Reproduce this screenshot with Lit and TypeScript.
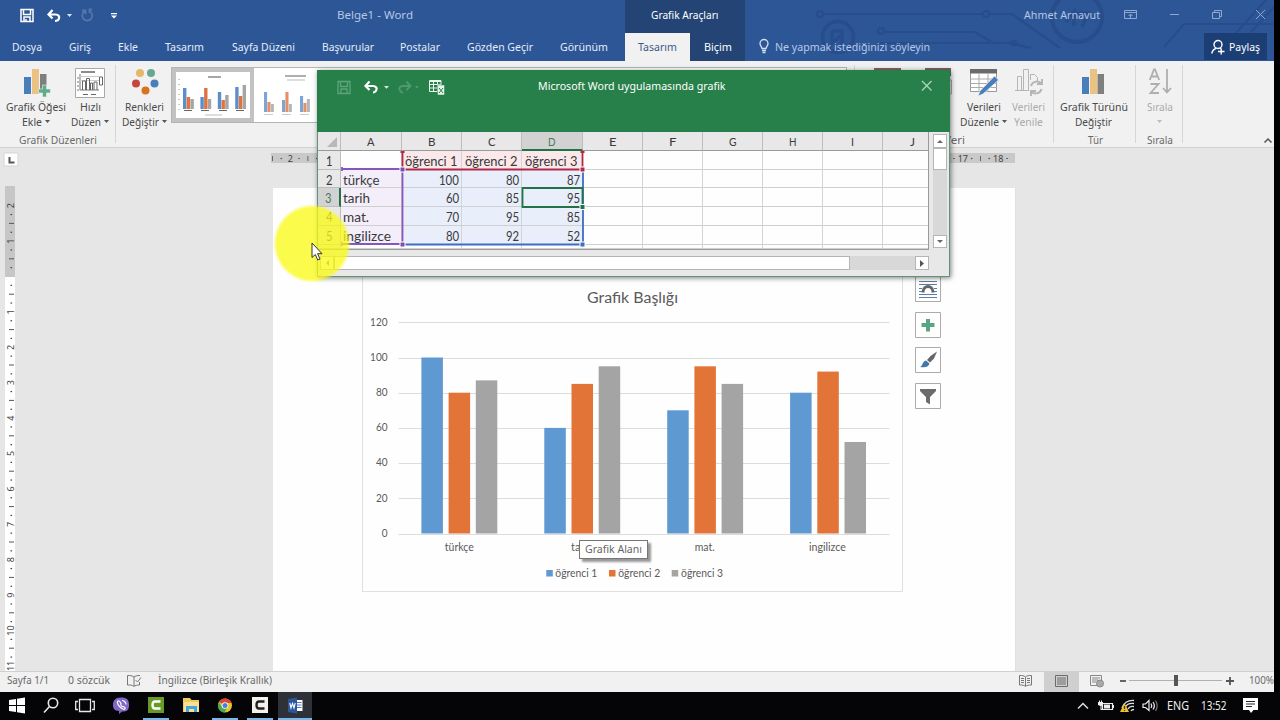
import { LitElement, html, svg, css } from "lit";
import { customElement } from "lit/decorators.js";

// A run of text set to an exact advance width; baseline is 12px below the top.
const t = (s: string, w: number, size = 11.5, cls = "") => html`<svg class="t ${cls}" width=${w} height="15"><text x="0" y="12" font-size=${size} textLength=${w} lengthAdjust="spacingAndGlyphs">${s}</text></svg>`;

const base = css`
  :host { display: block; box-sizing: border-box; font-family: "Noto Sans", "Open Sans", sans-serif; color: #4a4a4a; }
  * { box-sizing: border-box; }
  svg { display: block; overflow: visible; flex: none; }
  .t { fill: currentColor; white-space: pre; }
  .lato { font-family: Lato, sans-serif; }
`;

const caret = (c = "#555") => svg`<svg width="5" height="3"><path d="M0 0h5L2.500 3z" fill=${c}/></svg>`;

@customElement("title-header")
class TitleHeader extends LitElement {
  static styles = [base, css`
    :host { height: 61px; background: #2d5696; color: #fff; display: grid; }
    .art, .rows { grid-area: 1 / 1; }
    .rows { display: grid; grid-template-rows: 33px 28px; }
    .title { display: grid; grid-template-columns: 20px 27px 20px 14px 30px 226px 288px 120px 279px 101px 45px 42px 44px 18px; align-items: start; }
    .title > * { margin-top: 7px; }
    .dim { color: #b4c7e4; }
    .title > .ctx { background: #234475; height: 33px; margin: 0; padding: 7px 0 0 26px; }
    .tabs { display: grid; grid-template-columns: 54px 52px 44px 69px 88px 81px 64px 96px 77px 65px 55px 14px 445px 63px; }
    .tab { display: flex; justify-content: center; padding-top: 6px; color: #e6edf8; }
    .tab.g { padding-right: 5px; }
    .tab.on { background: #f1f1f1; color: #41598c; }
    .tab.bi { background: #234475; color: #fff; }
    .tell { display: flex; padding-top: 6px; gap: 6px; color: #b9cae6; }
    .share { background: #1b3f75; color: #fff; height: 27px; display: flex; gap: 4px; padding: 6px 0 0 7px; }
  `];
  render() {
    const tabs: [string, number][] = [["Dosya", 30], ["Giriş", 22], ["Ekle", 20], ["Tasarım", 39], ["Sayfa Düzeni", 63], ["Başvurular", 52], ["Postalar", 40], ["Gözden Geçir", 66]];
    return html`
      <svg class="art" width="1274" height="61" fill="none" stroke="#274d8c" stroke-width="2.200">
        <circle cx="820" cy="14" r="3"/><path d="M824 14h160M990 14h22l48 34"/><circle cx="986" cy="14" r="3"/>
        <circle cx="838" cy="37" r="15.500" stroke-width="3.500"/><path d="M832 31h12M832 31v12l10-8v10" stroke-width="3.500"/>
        <circle cx="881" cy="31" r="3"/><path d="M885 32h90l18 11h18l20 5"/><path d="M880 43h110" />
        <circle cx="1077" cy="17" r="25" stroke-width="4"/><path d="M1066 22l8-10v14M1074 13h14l-6 14" stroke-width="3.500"/>
        <path d="M1164 47l20-23h90M1236 33l30-33M1250 33l24-26"/><circle cx="1014" cy="43" r="2.500"/>
      </svg>
      <div class="rows">
        <div class="title">
          <i></i>
          <svg width="14" height="15" fill="none" stroke="#fff" stroke-width="1.500"><path d="M1 2.500h12v12H1zM3.500 3v4.500h7V3M4 14v-4h6v4M6 14v-2"/></svg>
          <svg width="14" height="15" fill="none" stroke="#fff" stroke-width="2.200"><path d="M1.500 7.500H8.500C12 7.500 12.500 10 12 11.500S10 14 8 14M5.500 3L1.500 7.500l4 4"/></svg>
          <svg width="6" height="12" fill="#dbe5f4"><path d="M0 7h5L2.500 10z"/></svg>
          <svg width="12" height="15" fill="none" stroke="#5575ac" stroke-width="1.800"><path d="M3.500 4.500a5 5 0 1 0 5.500 0M1 3.500h3.500V7M11 2.500H8.500V6"/></svg>
          <svg width="7" height="12" fill="#fff"><path d="M0 6h6v1.200H0zM0 8.500h6l-3 3z"/></svg>
          <span class="dim">${t("Belge1  -  Word", 76)}</span>
          <div class="ctx">${t("Grafik Araçları", 67.5)}</div>
          <i></i>
          <span class="dim">${t("Ahmet Arnavut", 76)}</span>
          <svg width="13" height="15" fill="none" stroke="#8fa8d0"><path d="M-.5 3.500h12v8H-.5zM-.5 5.500h12M5.500 11V7M3.500 9l2-2 2 2"/></svg>
          <svg width="10" height="15" stroke="#8fa8d0"><path d="M0 7.500h9"/></svg>
          <svg width="11" height="15" fill="none" stroke="#8fa8d0"><path d="M.5 5.500h7v6h-7zM2.500 5.500v-2h7v6h-2"/></svg>
          <svg width="10" height="15" stroke="#8fa8d0"><path d="M0 3l9 9M9 3l-9 9"/></svg>
        </div>
        <div class="tabs">
          ${tabs.map(([s, w]) => html`<div class="tab">${t(s, w)}</div>`)}
          <div class="tab g">${t("Görünüm", 48)}</div>
          <div class="tab on">${t("Tasarım", 39)}</div>
          <div class="tab bi">${t("Biçim", 28)}</div>
          <i></i>
          <div class="tell"><svg width="10" height="15" fill="none" stroke="#d5e0f2" stroke-width="1.300"><path d="M3 9.500C3 8 1 7 1 4.500a4 4 0 0 1 8 0C9 7 7 8 7 9.500zM3 11.500h4M3.500 13.500h3"/></svg>${t("Ne yapmak istediğinizi söyleyin", 155)}</div>
          <div class="share"><svg width="14" height="15" fill="none" stroke="#fff" stroke-width="1.400"><circle cx="7" cy="5.500" r="4"/><path d="M.7 14.500C1.500 11.500 3 10 5 9.500M9 9l1.500 1.500M7 12.500h6.500M10.200 9.500v6"/></svg>${t("Paylaş", 31)}</div>
        </div>
      </div>`;
  }
}

@customElement("chart-ribbon")
class ChartRibbon extends LitElement {
  static styles = [base, css`
    :host { height: 87px; background: #f1f1f1; border-bottom: 1px solid #d2d2d2; display: grid; grid-template-columns: 116px 739px 199px 82px 47px 1fr; }
    .group { position: relative; display: grid; grid-template-rows: 71px 15px; }
    .group::after { content: ""; position: absolute; right: 0; top: 4px; height: 78px; width: 1px; background: #d6d6d6; }
    .btns { display: flex; }
    .btn { display: grid; grid-template-rows: 38px 15px 15px; justify-items: center; }
    .btn svg.ic { margin-top: 7px; }
    .btn svg.nudge { margin-left: 4px; }
    .lab { display: flex; justify-content: center; color: #6a6a6a; }
    .row { display: flex; align-items: center; gap: 3px; }
    .off { color: #aaa; }
    .w71 { width: 71px; } .w36 { width: 36px; padding-right: 1px; } .w55 { width: 55px; } .w57 { width: 57px; } .w65 { width: 65px; } .w79 { width: 79px; } .w47 { width: 47px; }
    .gallery { display: flex; margin: 6px 0 0 -2px; width: 676px; height: 56px; background: #fff; border: 1px solid #b5b5b5; }
    .sel { width: 82px; height: 54px; border: 4px solid #c2c2c2; }
    .end { display: flex; justify-content: flex-end; padding: 0 2px 4px 0; align-items: flex-end; }
  `];
  render() {
    const thumb = (vals: number[][], bw: number, step: number, h: number) => vals.map((g, i) => g.map((v, k) => svg`<rect x=${i * step + k * bw} y=${h - v} width=${bw - 0.3} height=${v} fill=${["#5b8fca", "#df7440", "#a5a5a5"][k]}/>`));
    return html`
      <div class="group"><div class="btns">
        <div class="btn w71"><svg class="ic nudge" width="27" height="31"><path d="M0 9h7v17H0z" fill="#4a7ebb"/><path d="M8 1h7v25H8z" fill="#eac282"/><path d="M16 6h6.500v15H16z" fill="#7f7f7f"/><path d="M18.500 17h4v4h4v4h-4v4h-4v-4h-4v-4h4z" fill="#5fae8b" stroke="#f1f1f1" stroke-width=".6"/></svg>${t("Grafik Öğesi", 60)}<div class="row">${t("Ekle", 20)}${caret()}</div></div>
        <div class="btn w36"><svg class="ic" width="30" height="30" fill="none" stroke="#666"><path d="M.5 .5h29v29H.5z" fill="#fff" stroke="#a8a8a8"/><path d="M6 4h14" stroke-width="1.500"/><path d="M5 6v16h19M2 10h2M2 14h2M2 18h2M2 22h2" stroke="#777"/><path d="M5 8.500h19M5 12.500h19" stroke="#ccc"/><path d="M7.500 22v-9h3v9M11.500 22V10.500h3V22M15.500 22v-7h2v7M19 22v-8h3v8M24.500 9h3v8h-3z"/><path d="M8 26.500h5M16 26.500h5"/></svg>${t("Hızlı", 21)}<div class="row">${t("Düzen", 30)}${caret()}</div></div>
      </div><div class="lab">${t("Grafik Düzenleri", 78)}</div></div>

      <div class="group"><div class="btns">
        <div class="btn w57"><svg class="ic" width="28" height="28"><circle cx="9" cy="5" r="4" fill="#e3b869"/><circle cx="20" cy="5" r="4" fill="#67a893"/><circle cx="5" cy="15.500" r="4" fill="#c3493f"/><circle cx="23.500" cy="15.500" r="4" fill="#4a7ebb"/><circle cx="14.500" cy="22.500" r="4" fill="#d87320"/></svg>${t("Renkleri", 39)}<div class="row">${t("Değiştir", 37)}${caret()}</div></div>
        <div class="gallery">
          <div class="sel"><svg width="74" height="46"><path d="M32 5h13" stroke="#777" stroke-width="1.300"/><path d="M3 7v31" stroke="#999" stroke-dasharray="1 4"/><g transform="translate(7 0)">${thumb([[21, 12, 10], [12, 21, 10], [17, 9, 14], [22, 13, 24]], 3.7, 17.4, 37)}</g><path d="M8 38.500h8M25 38.500h8M43 38.500h8M60 38.500h8" stroke="#666" stroke-width="1.200"/><path d="M29 43h17" stroke="#bbb"/></svg></div>
          <svg width="60" height="54"><path d="M31 8h21" stroke="#777" stroke-width="1.200"/><path d="M33 12h18" stroke="#bbb"/><g transform="translate(10 0)" opacity=".8">${thumb([[20, 10, 8], [12, 20, 8], [16, 9, 13]], 3.4, 18, 44)}</g><path d="M10 46.500h9M28 46.500h9M46 46.500h9" stroke="#ccc"/></svg>
        </div>
      </div></div>

      <div class="group"><div class="btns">
        <div class="btn w65"><svg class="ic" width="27" height="28"><path d="M0 0h27v5H0z" fill="#8a5f66"/></svg></div>
        <div class="btn w36"><svg class="ic" width="26" height="28"><path d="M0 0h26v8H0z" fill="#7b6268"/><path d="M18 12h8.500v14H18z" fill="#e6e6e6" stroke="#aaa"/></svg></div>
        <div class="btn w55"><svg class="ic" width="28" height="28"><path d="M.5 3.500h26v20H.5z" fill="#fff" stroke="#999"/><path d="M0 1h27v4.500H0z" fill="#6a6a6a"/><path d="M0 11h27M0 15.500h27M0 19.500h27M9 6v18M18 6v18" stroke="#aaa"/><path d="M24.500 8l4 4L13 26l-5 2 2-5z" fill="#4a7ebb" stroke="#f1f1f1" stroke-width=".7"/></svg>${t("Verileri", 34)}<div class="row">${t("Düzenle", 39)}${caret()}</div></div>
        <div class="btn w36 off"><svg class="ic" width="28" height="28" fill="none" stroke="#b5b5b5"><path d="M0 22.500h14M2.500 22V8.500h4V22M8.500 22V1.500h5V22M15.500 12V6.500h4l3 3v4"/><path d="M16 18a6 5.500 0 0 1 10-3M27 11v5h-5M26.500 21a6 5.500 0 0 1-10 3M16 28v-5h5" stroke-width="1.900"/></svg>${t("Verileri", 33)}${t("Yenile", 29)}</div>
      </div><div class="lab">${t("Veri", 21)}</div></div>

      <div class="group"><div class="btns"><div class="btn w79"><svg class="ic" width="23" height="28"><path d="M0 9h7v17H0z" fill="#4a7ebb"/><path d="M8 1h7v25H8z" fill="#eac282"/><path d="M15.500 6h6.500v20h-6.500z" fill="#7f7f7f"/></svg>${t("Grafik Türünü", 68)}${t("Değiştir", 37)}</div></div><div class="lab">${t("Tür", 15)}</div></div>

      <div class="group"><div class="btns"><div class="btn w47 off"><svg class="ic" width="22" height="28" fill="none" stroke="#aeaeae" stroke-width="1.800"><path d="M.8 12L5 1.500h1L10.200 12M2.500 8.500h6.500M1.500 16h8L1.500 25h8.500M18 1v23M14 20l4 4.500 4-4.500"/></svg>${t("Sırala", 26)}<div class="row">${caret("#bbb")}</div></div></div><div class="lab">${t("Sırala", 26)}</div></div>
      <div class="end"><svg width="8" height="5" fill="none" stroke="#555" stroke-width="1.500"><path d="M.5 4.500L4 1l3.500 3.500"/></svg></div>`;
  }
}

const CM = 35.4;

@customElement("bar-chart")
class BarChart extends LitElement {
  static styles = [base, css`
    :host { width: 541px; height: 322px; border: 1px solid #e0e0e0; background: #fefefe; }
    text { fill: #5a5a5a; font-family: Lato, sans-serif; }
  `];
  render() {
    const cats: [string, number, number[]][] = [["türkçe", 29, [100, 80, 87]], ["tarih", 22, [60, 85, 95]], ["mat.", 20, [70, 95, 85]], ["ingilizce", 37, [80, 92, 52]]];
    const fills = ["#5f99d2", "#e37438", "#a4a4a4"];
    const y = (v: number) => 262.5 - v * 1.76;
    const txt = (s: string, x: number, yy: number, w: number, size: number) => svg`<text x=${x} y=${yy} font-size=${size} textLength=${w} lengthAdjust="spacingAndGlyphs">${s}</text>`;
    return html`<svg width="539" height="320">
      ${txt("Grafik Başlığı", 224, 31.5, 91, 15.5)}
      ${[0, 20, 40, 60, 80, 100, 120].map(v => svg`<path d="M35.500 ${Math.round(y(v)) + .5}h491" stroke="#dcdcdc"/>${txt(String(v), 24.5 - String(v).length * 5.8, y(v) + 3.3, String(v).length * 5.8, 10.5)}`)}
      ${cats.map(([n, w, vs], i) => svg`${vs.map((v, k) => svg`<rect x=${58.4 + i * 122.9 + k * 27.2} y=${y(v)} width="21.500" height=${v * 1.76} fill=${fills[k]}/>`)}${txt(n, 96.3 + i * 122.7 - w / 2, 280, w, 10.5)}`)}
      ${[0, 1, 2].map(k => svg`<rect x=${183.3 + k * 62.7} y="299" width="6.500" height="6.500" fill=${fills[k]}/>${txt("öğrenci " + (k + 1), 192.3 + k * 62.9, 306, 42, 10.8)}`)}
    </svg>`;
  }
}

@customElement("document-area")
class DocumentArea extends LitElement {
  static styles = [base, css`
    :host { height: 523px; background: #e6e6e6; display: grid; grid-template: 40px 483px / 273px 743px; overflow: hidden; }
    .corner { padding: 5px 0 0 4px; }
    .page { background: #fefefe; border-right: 1px solid #e0e0e0; padding: 82px 0 0 89px; display: flex; align-items: flex-start; gap: 12px; }
    .vr { padding-left: 5px; }
    .tools { display: grid; gap: 9.5px; padding-top: 6px; }
    text { fill: #444; font-size: 9px; text-anchor: middle; }
  `];
  render() {
    // Quarter-centimetre steps: a number on each full one, a bar on halves, a dot between.
    const horizontal = [-10, -9, -8, -7, -6, -5, 67, 68, 69, 70, 71, 72, 73];
    const hMarks = horizontal.map(q => {
      const x = q * CM / 4;
      return q % 4 === 0 ? svg`<text x=${x} y="9">${Math.abs(q / 4)}</text>`
        : q % 2 === 0 ? svg`<path d="M${x} 3.500v5" stroke="#666"/>`
        : svg`<path d="M${x - .8} 6h1.600" stroke="#555" stroke-width="1.200"/>`;
    });
    const vMarks = Array.from({ length: 53 }, (_, i) => i - 8).filter(q => q !== 0).map(q => {
      const y = 88.5 + q * CM / 4;
      return q % 4 === 0 ? svg`<text transform="translate(14 ${y}) rotate(-90)" dy="0">${Math.abs(q / 4)}</text>`
        : q % 2 === 0 ? svg`<path d="M9 ${y}h5" stroke="#555"/>`
        : svg`<path d="M10.500 ${y}h1.600" stroke="#444" stroke-width="1.200"/>`;
    });
    return html`
      <div class="corner"><svg width="15" height="14"><path d="M0 0h14v13H0z" fill="#fff" stroke="#d4d4d4"/><path d="M5.500 4v5.500h5" fill="none" stroke="#555" stroke-width="2"/></svg></div>
      <svg width="743" height="40"><path d="M-2 5h90v10H-2zM654 5h88v10H654z" fill="#c9c9c9"/><path d="M88 5h566v10H88z" fill="#fff"/><g transform="translate(88 4.500)">${hMarks}</g></svg>
      <div class="vr"><svg width="10" height="483"><path d="M0 -2h10v91H0z" fill="#c6c6c6"/><path d="M0 89h10v394H0z" fill="#fff"/><g transform="translate(-5 0)">${vMarks}</g></svg></div>
      <div class="page">
        <bar-chart></bar-chart>
        <div class="tools">
          <svg width="26" height="26" fill="none"><path d="M.5 .5h25v25H.5z" stroke="#ababab" fill="#fff"/><path d="M4 5.500h18M4 8.500h18M4 12.500h3M19 12.500h3M4 15.500h3M19 15.500h3M4 18.500h18M4 21.500h18" stroke="#5b7ea8"/><path d="M8 16.500c0-8 10-8 10 0" stroke="#666" stroke-width="3"/></svg>
          <svg width="26" height="26"><path d="M.5 .5h25v25H.5z" fill="#fff" stroke="#ababab"/><path d="M11 7h4v4h4.500v4H15v4.500h-4V15H6.500v-4H11z" fill="#5ba587"/></svg>
          <svg width="26" height="26"><path d="M.5 .5h25v25H.5z" fill="#fff" stroke="#ababab"/><path d="M22 4.500l-3 7-4 4-3-2.500 3.500-4z" fill="#666"/><path d="M11 13.500l3.500 3c-1 4-5 4-9.500 3.500 3-1 2-5.500 6-6.500z" fill="#4077ad"/></svg>
          <svg width="26" height="26"><path d="M.5 .5h25v25H.5z" fill="#fff" stroke="#ababab"/><path d="M5 6h16v2l-6 6v7.500l-4-2.500v-5L5 8z" fill="#6c6c6c"/></svg>
        </div>
      </div>`;
  }
}

@customElement("sheet-window")
class SheetWindow extends LitElement {
  static styles = [base, css`
    :host { width: 633px; height: 207px; background: #e8e8e8; border: 1px solid #5f9279; border-top: 0; box-shadow: 1px 1px 5px rgba(0,0,0,.5); color: #3a3a3a; }
    .bar { background: #277f49; height: 62px; margin: 0 -1px; display: grid; grid-template-columns: 20px 27px 20px 14px 17px 14px 109px 384px 28px; align-items: start; padding-top: 9px; color: #fff; }
    .bar .t { margin-top: -1px; }
    .body { display: grid; grid-template-columns: 611px 20px; height: 118px; }
    .grid { position: relative; display: grid; grid-template: 19px 19px 18px 19px 19px 19px 4px / 23px 61px 60px 60px 61px 60px 60px 60px 60px 60px 60px; overflow: hidden; border-right: 1px solid #9a9a9a; border-bottom: 1px solid #9a9a9a; }
    .c { border-right: 1px solid #d4d4d4; border-bottom: 1px solid #cfcfcf; background: #fefefe; display: flex; justify-content: flex-end; padding: 2.5px 2px 0 2px; min-width: 0; overflow: hidden; }
    .h { background: #e8e8e8; border-color: #bdbdbd; justify-content: center; padding: 2.5px 0 0; }
    .top { border-bottom-color: #9a9a9a; padding-top: 2px; }
    .act { background: #d2d2d2; color: #4a7a5c; }
    .atop { border-bottom: 2px solid #217346; }
    .aleft { border-right: 2px solid #217346; }
    .corner { align-items: flex-end; justify-content: flex-end; padding: 0 3px 3px; }
    .l { justify-content: flex-start; }
    .red { background: #fae8ea; padding-left: 3px; } .pur { background: #f4eefb; } .blu { background: #e9eefb; }
    .range { position: absolute; left: 0; top: 0; }
    .sb { display: grid; grid-template-rows: 14px 22px 65px 13px; padding: 2px 2px 0 4px; }
    .k { background: #fff; border: 1px solid #b5b5b5; display: grid; place-items: center; }
    .tr { background: #d8d8d8; }
    .hs { display: grid; grid-template-columns: 14px 516px 65px 14px; height: 14px; margin: 6px 0 0 2px; }
  `];
  render() {
    const rows: string[][] = [["", "öğrenci 1", "öğrenci 2", "öğrenci 3"], ["türkçe", "100", "80", "87"], ["tarih", "60", "85", "95"], ["mat.", "70", "95", "85"], ["ingilizce", "80", "92", "52"], []];
    const wl: Record<string, number> = { "türkçe": 36.5, "tarih": 27, "mat.": 26, "ingilizce": 48 };
    const cell = (r: number, c: number) => {
      const s = rows[r][c] ?? "";
      const tone = r > 4 || c > 3 ? "" : r === 0 ? (c ? "red" : "") : c === 0 ? "pur" : "blu";
      const w = wl[s] ?? (r === 0 ? 52.5 : s.length * 6.6);
      return html`<div class="c ${tone} ${r === 0 || c === 0 ? "l" : ""}">${s ? t(s, w, 12.5, "lato") : ""}</div>`;
    };
    const cols = [..."ABCDEFGHIJ"];
    return html`
      <div class="bar">
        <i></i>
        <svg width="14" height="15" fill="none" stroke="#5fa57a" stroke-width="1.300"><path d="M1 2.500h12v12H1zM3.500 3v4.500h7V3M4 14v-4h6v4"/></svg>
        <svg width="14" height="15" fill="none" stroke="#fff" stroke-width="2.200"><path d="M1.500 7H9c3 0 4 2 3.500 3.500S11 13.500 9 13.500M5.500 2.500L1.500 7l4 4"/></svg>
        <svg width="6" height="12" fill="#d8ebdf"><path d="M0 7h5L2.500 9.800z"/></svg>
        <svg width="14" height="15" fill="none" stroke="#4e9a6b" stroke-width="2"><path d="M12.500 7H5c-3 0-4 2-3.500 3.500S3 13.500 5 13.500M8.500 2.500l4 4.500-4 4"/></svg>
        <svg width="6" height="12" fill="#4e9a6b"><path d="M0 7h4L2 9.800z"/></svg>
        <svg width="16" height="15" fill="none" stroke="#e9f4ed"><path d="M.5 1.500h11.500v11H.5zM0 2.500h12M0 5.500h12M0 9h12M4.500 2v10M8.500 2v10"/><path d="M8.500 6h7v10h-7z" fill="#e9f4ed" stroke="#277f49" stroke-width=".5"/><path d="M10 9l4 5M14 9l-4 5" stroke="#277f49"/></svg>
        ${t("Microsoft Word uygulamasında grafik", 187.5)}
        <svg width="10" height="15" stroke="#a9d5b8" stroke-width="1.400"><path d="M0 2l9.500 9.500M9.500 2L0 11.500"/></svg>
      </div>
      <div class="body">
        <div class="grid">
          <div class="c h top corner"><svg width="10" height="10"><path d="M10 0v10H0z" fill="#b8b8b8"/></svg></div>
          ${cols.map(c => html`<div class="c h top ${c === "D" ? "act atop" : ""}">${t(c, c === "I" ? 3 : c === "J" ? 5 : 7.5, 12, "lato")}</div>`)}
          ${rows.map((_, r) => html`<div class="c h ${r === 2 ? "act aleft" : ""}">${r < 5 ? t(String(r + 1), 6.5, 12.5, "lato") : ""}</div>${cols.map((_c, c) => cell(r, c))}`)}
          <svg class="range" width="611" height="117" fill="none" stroke-width="1.800">
            <path d="M24 37h60.500v75H24" stroke="#8657bb"/><path d="M85 112.500h180V37" stroke="#3f6dc4"/>
            <path d="M84.500 19v18.500h180V19" stroke="#b22846"/><path d="M204.500 56h60v19h-60z" stroke="#217346"/>
            <g stroke="#fff" stroke-width="1"><path d="M82 35h5v5h-5zM82 110h5v5h-5z" fill="#7b50ad"/><path d="M262 35h5v5h-5z" fill="#b22846"/><path d="M262 72.500h5v5h-5z" fill="#217346"/><path d="M262 110h5v5h-5z" fill="#3f6dc4"/></g>
            <path d="M82.500 20h4M262.500 20h4" stroke="#b22846"/><path d="M24 35v4M24 110v4" stroke="#8657bb"/>
          </svg>
        </div>
        <div class="sb"><div class="k"><svg width="6" height="3"><path d="M0 3l3-3 3 3z" fill="#666"/></svg></div><div class="k"></div><div class="tr"></div><div class="k"><svg width="6" height="3"><path d="M0 0h6L3 3z" fill="#666"/></svg></div></div>
      </div>
      <div class="hs"><div class="k"><svg width="3" height="6"><path d="M3 0v6L0 3z" fill="#777"/></svg></div><div class="k"></div><div class="tr"></div><div class="k"><svg width="4" height="7"><path d="M0 0v7l4-3.500z" fill="#555"/></svg></div></div>`;
  }
}

@customElement("status-bar")
class StatusBar extends LitElement {
  static styles = [base, css`
    :host { height: 21px; background: #f1f1f1; border-top: 1px solid #d0d0d0; display: grid; grid-template-columns: 7px 61px 59px 31px 861px 25px 46px 30px 9px 97px 23px 25px; overflow: hidden; color: #6a6a6a; align-items: start; }
    .sel { background: #cfcfcf; height: 20px; width: 35px; padding: 3px 0 0 11px; }
    .ic { margin-top: 3px; }
  `];
  render() {
    return html`<i></i>
      <div>${t("Sayfa 1/1", 42, 11)}</div><div>${t("0 sözcük", 42, 11)}</div>
      <svg class="ic" width="14" height="12" fill="none" stroke="#777"><path d="M7 2C5 .5 3 .5.500.5v9.500c3 0 5 0 6.500 1.500 1-1 3-1.500 5.500-1.500V7M7 2v9M7 2c1-1 3-1.500 6-1.500M8.500 5l2 2 3.500-4.500"/></svg>
      <div>${t("İngilizce (Birleşik Krallık)", 114, 11)}</div>
      <svg class="ic" width="13" height="12" fill="none" stroke="#777"><path d="M6.500 2C5 .5 3 .5.500.5V10c3 0 4.500 0 6 1.500 1.500-1.500 3-1.500 6-1.500V.5c-2.500 0-4.500 0-6 1.500v9M2 3.500h3M2 5.500h3M2 7.500h3M8 3.500h3M8 5.500h3M8 7.500h3"/></svg>
      <div class="sel"><svg width="13" height="12" fill="none" stroke="#6b6b6b"><path d="M.5 .5h12v11H.5zM2 3h9M2 5h9M2 7h9M2 9h9"/></svg></div>
      <svg class="ic" width="14" height="12" fill="none" stroke="#888"><path d="M7 10.500H.5V.5h11V5M2 3h8M2 5h6M2 7h4"/><circle cx="10" cy="8.500" r="3.500" fill="#aaa"/></svg>
      <svg class="ic" width="6" height="12" stroke="#555" stroke-width="1.800"><path d="M0 6h6"/></svg>
      <svg class="ic" width="94" height="12"><path d="M0 5.500h93" stroke="#b0b0b0"/><path d="M45 0h4v11h-4z" fill="#555"/></svg>
      <svg class="ic" width="8" height="12" stroke="#555" stroke-width="1.800"><path d="M0 6h8M4 2v8"/></svg>
      <div>${t("100%", 25, 11)}</div>`;
  }
}

@customElement("task-bar")
class TaskBar extends LitElement {
  static styles = [base, css`
    :host { height: 28px; background: #050507; color: #eee; display: grid; grid-template-columns: 34px 34px 36px 35px 35px 34px 35px 35px 799px 21px 22px 22px 25px 34px 42px 20px; }
    .a { width: 34px; display: flex; justify-content: center; padding-top: 5px; }
    .s { padding-top: 6px; }
    .run { box-shadow: inset 0 -2px #76b9ed; width: 26px; margin-left: 4px; }
    .cur { background: #2e3238; box-shadow: inset 0 -2px #76b9ed; }
  `];
  render() {
    return html`
      <div class="a"><svg width="16" height="17" fill="#fff"><path d="M0 3l7-1v6H0zM8 1.800L16 .5V8H8zM0 9h7v6l-7-1zM8 9h8v7.500l-8-1.300z"/></svg></div>
      <div class="a"><svg width="16" height="17" fill="none" stroke="#e8e8e8" stroke-width="1.600"><circle cx="10" cy="6" r="4.700"/><path d="M6.500 9.500L1 15.500"/></svg></div>
      <div class="a"><svg width="20" height="17" fill="none" stroke="#e8e8e8" stroke-width="1.300"><path d="M4.500 2.500h11v12h-11zM3 4.500H.7v8H3M17 4.500h2.300v8H17"/></svg></div>
      <div class="a"><svg width="16" height="17"><path d="M8 .5c6 0 8 2 8 7.500s-2 6.500-7 6.500L6 17v-3C1.500 13.500 0 12 0 8S2 .5 8 .5z" fill="#8067c8"/><path d="M5 4c-2 1 1 7 6 8.500 2-1 1.500-2-.5-3-1.500 1-3.500-2-2.500-3C7 4.500 6 3.500 5 4zM9 3.500c2 0 4 2 4 4" fill="none" stroke="#fff" stroke-width="1.200"/></svg></div>
      <div class="a run"><svg width="16" height="16"><path d="M0 0h16v16H0z" fill="#679b26"/><path d="M12.500 4.500H7c-1.500 0-2.500 1-2.500 3.500s1 3.500 2.500 3.500h5.500" fill="none" stroke="#fff" stroke-width="2.400"/></svg></div>
      <div class="a"><svg width="17" height="17"><path d="M0 1h7l1.500 2H16v12H0z" fill="#f0c95b"/><path d="M1 5h15v10H1z" fill="#fae094"/><path d="M3 15V9h11v6h-3v-3H6v3z" fill="#42a5dd"/></svg></div>
      <div class="a run"><svg width="16" height="17"><circle cx="8" cy="8.500" r="7" fill="#e8c32e"/><path d="M8 8.500L2 5a7 7 0 0 1 12.500 1H8z" fill="#d94535"/><path d="M1.700 5.300A7 7 0 0 0 7.500 15.500l3-5L5 10z" fill="#45a857"/><circle cx="8" cy="8.500" r="3.300" fill="#fff"/><circle cx="8" cy="8.500" r="2.500" fill="#4a80cf"/></svg></div>
      <div class="a run"><svg width="16" height="16"><path d="M0 0h16v16H0z" fill="#f2f2ec"/><path d="M12.500 4.500H7c-1.500 0-2.500 1-2.500 3.500s1 3.500 2.500 3.500h5.500" fill="none" stroke="#222" stroke-width="2.400"/></svg></div>
      <div class="a cur"><svg width="15" height="17"><path d="M8 3h6.500v11H8z" fill="#fff"/><path d="M9 5.500h4.500M9 8h4.500M9 10.500h4.500" stroke="#5578b5"/><path d="M0 2l9-1.500v16L0 15z" fill="#2b579a"/><path d="M1.800 6l1.200 5 1.500-4.500L6 11l1.200-5" fill="none" stroke="#fff" stroke-width="1.100"/></svg></div>
      <div class="s"><svg width="12" height="15" fill="none" stroke="#ddd" stroke-width="1.500"><path d="M1 10.500L6 5.500l5 5"/></svg></div>
      <div class="s"><svg width="16" height="15"><path d="M4.500 5.500h10v6h-10z" fill="none" stroke="#eee" stroke-width="1.200"/><path d="M6 6.500h6v4H6zM15 7h1v3h-1z" fill="#eee"/><path d="M0 4h1V2.500h1V4h1V2.500h1V4h1v3L3.500 8v3H5v1H2.500V8L0 7z" fill="#eee"/></svg></div>
      <div class="s"><svg width="16" height="15" fill="none" stroke="#ddd" stroke-width="1.300"><path d="M2 10C3 5 8 2 14 2.500M5 10c1-3 4-5 9-4.500M8 11c1-2 3-3 6-2.500M11 13c.5-1 1.500-1.500 3-1.500"/><path d="M4.500 5L9 14H0z" fill="#efc02f" stroke="none"/><path d="M4.500 8v3M4.500 12v1" stroke="#333"/></svg></div>
      <div class="s"><svg width="16" height="15" fill="none" stroke="#eee" stroke-width="1.200"><path d="M1 6h2.500L7 2.500v10L3.500 9.500H1zM9 5.500c1 1.500 1 3 0 4.500M11 4c1.800 2.500 1.800 5 0 7.500"/><path d="M13.500 2.500c2.200 3.500 2.200 7 0 10.500" stroke="#777"/></svg></div>
      <div class="s">${t("ENG", 22, 12)}</div>
      <div class="s">${t("13:52", 25.5, 12)}</div>
      <div class="s"><svg width="16" height="15"><path d="M0 0h15v12h-4.500L8 15l-2-3H0z" fill="#fff"/><path d="M3 3.500h9M3 6h9M3 8.500h6" stroke="#222"/></svg></div>`;
  }
}

@customElement("app-root")
class AppRoot extends LitElement {
  static styles = [base, css`
    :host { position: relative; width: 1280px; height: 720px; background: #000; overflow: hidden; }
    .main { width: 1274px; height: 692px; overflow: hidden; }
    .win { position: absolute; left: 317px; top: 70px; }
    .tip { position: absolute; left: 579px; top: 540px; width: 69px; height: 19px; background: #fff; border: 1px solid #767676; box-shadow: 3px 3px 2px rgba(0,0,0,.4); padding: 0 0 0 5px; color: #666; }
    .halo { position: absolute; left: 273px; top: 204px; width: 78px; height: 79px; border-radius: 50%; background: radial-gradient(closest-side, rgba(250,250,20,.76) 90%, rgba(250,250,20,0)); }
    .ptr { position: absolute; left: 311px; top: 242px; }
  `];
  render() {
    return html`
      <div class="main"><title-header></title-header><chart-ribbon></chart-ribbon><document-area></document-area><status-bar></status-bar></div>
      <task-bar></task-bar>
      <sheet-window class="win"></sheet-window>
      <div class="tip">${t("Grafik Alanı", 57)}</div>
      <div class="halo"></div>
      <svg class="ptr" width="12" height="19"><path d="M1 1v14.500l3.300-3 2.400 5.500 2.300-1-2.400-5.300h4.400z" fill="#fff" stroke="#333"/></svg>`;
  }
}
